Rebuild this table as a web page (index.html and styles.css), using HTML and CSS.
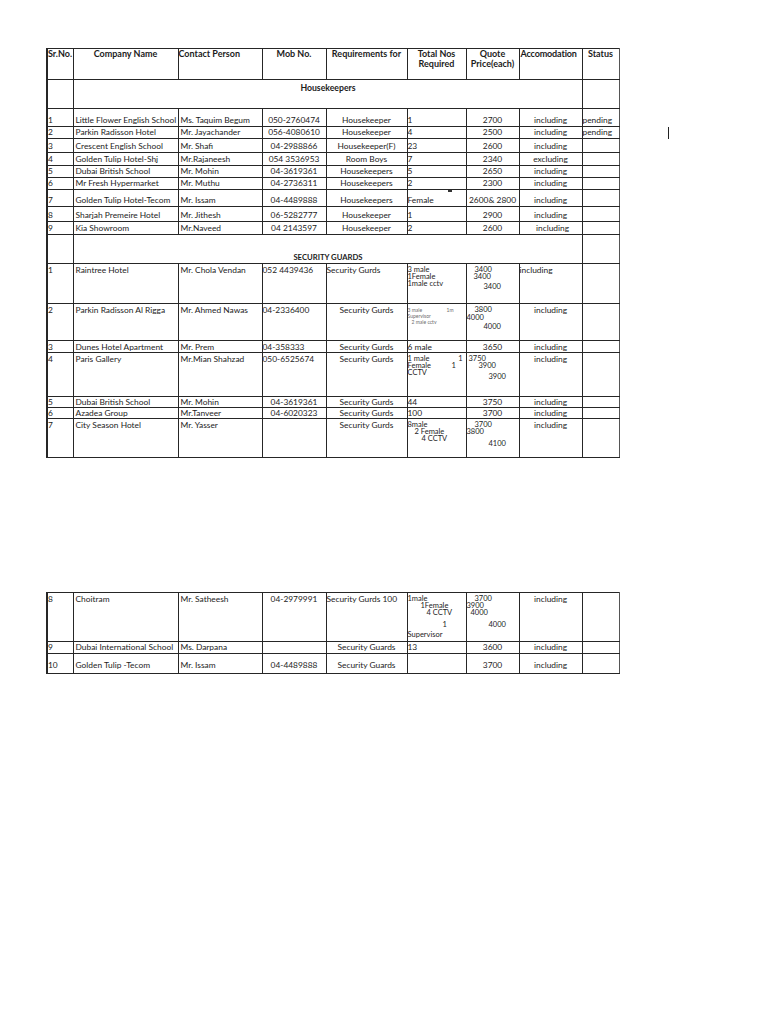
FILE: index.html
```html
<!DOCTYPE html>
<html>
<head>
<meta charset="utf-8">
<title>Requirements</title>
<link rel="stylesheet" href="styles.css">
</head>
<body>
<div class="page">
  <table class="sheet">
    <colgroup>
      <col class="c-sr"><col class="c-co"><col class="c-cp"><col class="c-mob"><col class="c-req"><col class="c-tot"><col class="c-qt"><col class="c-acc"><col class="c-st">
    </colgroup>
    <tr class="hdr">
      <td class="l">Sr.No.</td>
      <td class="c">Company Name</td>
      <td class="l">Contact Person</td>
      <td class="c">Mob No.</td>
      <td class="c">Requirements for</td>
      <td class="c">Total Nos<br>Required</td>
      <td class="c">Quote<br>Price(each)</td>
      <td class="l tight">Accomodation</td>
      <td class="c">Status</td>
    </tr>
    <tr class="h29">
      <td></td>
      <td colspan="7" class="sec top">Housekeepers</td>
      <td></td>
    </tr>
    <tr class="h18">
      <td class="sr">1</td><td>Little Flower English School</td><td>Ms. Taquim Begum</td><td class="c">050-2760474</td><td class="c">Housekeeper</td><td class="sr">1</td><td class="c">2700</td><td class="c">including</td><td class="sr">pending</td>
    </tr>
    <tr class="h12">
      <td class="sr">2</td><td>Parkin Radisson Hotel</td><td>Mr. Jayachander</td><td class="c">056-4080610</td><td class="c">Housekeeper</td><td class="sr">4</td><td class="c">2500</td><td class="c">including</td><td class="sr">pending</td>
    </tr>
    <tr class="h14">
      <td class="sr">3</td><td>Crescent English School</td><td>Mr. Shafi</td><td class="c">04-2988866</td><td class="c">Housekeeper(F)</td><td class="sr">23</td><td class="c">2600</td><td class="c">including</td><td></td>
    </tr>
    <tr class="h13">
      <td class="sr">4</td><td>Golden Tulip Hotel-Shj</td><td>Mr.Rajaneesh</td><td class="c">054 3536953</td><td class="c">Room Boys</td><td class="sr">7</td><td class="c">2340</td><td class="c">excluding</td><td></td>
    </tr>
    <tr class="h12">
      <td class="sr">5</td><td>Dubai British School</td><td>Mr. Mohin</td><td class="c">04-3619361</td><td class="c">Housekeepers</td><td class="sr">5</td><td class="c">2650</td><td class="c">including</td><td></td>
    </tr>
    <tr class="h12">
      <td class="sr">6</td><td>Mr Fresh Hypermarket</td><td>Mr. Muthu</td><td class="c">04-2736311</td><td class="c">Housekeepers</td><td class="sr">2</td><td class="c">2300</td><td class="c">including</td><td></td>
    </tr>
    <tr class="h17">
      <td class="sr">7</td><td>Golden Tulip Hotel-Tecom</td><td>Mr. Issam</td><td class="c">04-4489888</td><td class="c">Housekeepers</td><td class="sr">Female</td><td class="c">2600&amp; 2800</td><td class="c">including</td><td></td>
    </tr>
    <tr class="h15">
      <td class="sr">8</td><td>Sharjah Premeire Hotel</td><td>Mr. Jithesh</td><td class="c">06-5282777</td><td class="c">Housekeeper</td><td class="sr">1</td><td class="c">2900</td><td class="c">including</td><td></td>
    </tr>
    <tr class="h13">
      <td class="sr">9</td><td>Kia Showroom</td><td>Mr.Naveed</td><td class="c">04 2143597</td><td class="c">Housekeeper</td><td class="sr">2</td><td class="c">2600</td><td class="c nudge">including</td><td></td>
    </tr>
    <tr class="h29">
      <td></td>
      <td colspan="7" class="sec">SECURITY GUARDS</td>
      <td></td>
    </tr>
    <tr class="h40 tp">
      <td class="sr">1</td><td>Raintree Hotel</td><td>Mr. Chola Vendan</td><td class="l0">052 4439436</td><td class="l0">Security Gurds</td>
      <td class="ml"><div>3 male</div><div>1Female</div><div>1male cctv</div></td>
      <td class="ml"><div class="x8">3400</div><div class="x7">3400</div><div class="x17 g3">3400</div></td>
      <td class="l0">including</td><td></td>
    </tr>
    <tr class="h37 tp">
      <td class="sr">2</td><td>Parkin Radisson Al Rigga</td><td>Mr. Ahmed Nawas</td><td class="l0">04-2336400</td><td class="c">Security Gurds</td>
      <td class="ml tiny"><div class="split"><span>3 male</span><span class="r12">1m</span></div><div>Supervisor</div><div class="x4">2 male cctv</div></td>
      <td class="ml lh9"><div class="x8">3800</div><div>4000</div><div class="x17">4000</div></td>
      <td class="c">including</td><td></td>
    </tr>
    <tr class="h12 tp">
      <td class="sr">3</td><td>Dunes Hotel Apartment</td><td>Mr. Prem</td><td class="l0">04-358333</td><td class="c">Security Gurds</td><td class="sr">6 male</td><td class="c">3650</td><td class="c">including</td><td></td>
    </tr>
    <tr class="h44 tp">
      <td class="sr">4</td><td>Paris Gallery</td><td>Mr.Mian Shahzad</td><td class="l0">050-6525674</td><td class="c">Security Gurds</td>
      <td class="ml"><div class="split"><span>1 male</span><span class="r1">1</span></div><div><span class="w44">Female</span>1</div><div>CCTV</div></td>
      <td class="ml"><div class="x2">3750</div><div class="x12">3900</div><div class="x22 g4">3900</div></td>
      <td class="c">including</td><td></td>
    </tr>
    <tr class="h11 tp">
      <td class="sr">5</td><td>Dubai British School</td><td>Mr. Mohin</td><td class="c">04-3619361</td><td class="c">Security Gurds</td><td class="sr">44</td><td class="c">3750</td><td class="c">including</td><td></td>
    </tr>
    <tr class="h11 tp">
      <td class="sr">6</td><td>Azadea Group</td><td>Mr.Tanveer</td><td class="c">04-6020323</td><td class="c">Security Gurds</td><td class="sr">100</td><td class="c">3700</td><td class="c">including</td><td></td>
    </tr>
    <tr class="h39 tp">
      <td class="sr">7</td><td>City Season Hotel</td><td>Mr. Yasser</td><td></td><td class="c">Security Gurds</td>
      <td class="ml"><div>8male</div><div class="x7">2 Female</div><div class="x14">4 CCTV</div></td>
      <td class="ml"><div class="x8">3700</div><div>3800</div><div class="x22 g5">4100</div></td>
      <td class="c">including</td><td></td>
    </tr>
  </table>

  <table class="sheet second">
    <colgroup>
      <col class="c-sr"><col class="c-co"><col class="c-cp"><col class="c-mob"><col class="c-req"><col class="c-tot"><col class="c-qt"><col class="c-acc"><col class="c-st">
    </colgroup>
    <tr class="h49 tp">
      <td class="sr">8</td><td>Choitram</td><td>Mr. Satheesh</td><td class="c">04-2979991</td><td class="l0">Security Gurds 100</td>
      <td class="ml"><div>1male</div><div class="x13">1Female</div><div class="x19">4 CCTV</div><div class="x35 g4">1</div><div class="g3">Supervisor</div></td>
      <td class="ml"><div class="x8">3700</div><div>3900</div><div class="x4">4000</div><div class="x22 g5">4000</div></td>
      <td class="c">including</td><td></td>
    </tr>
    <tr class="h12">
      <td class="sr">9</td><td>Dubai International School</td><td>Ms. Darpana</td><td></td><td class="c">Security Guards</td><td class="sr">13</td><td class="c">3600</td><td class="c">including</td><td></td>
    </tr>
    <tr class="h20 lift">
      <td class="sr">10</td><td>Golden Tulip -Tecom</td><td>Mr. Issam</td><td class="c">04-4489888</td><td class="c">Security Guards</td><td></td><td class="c">3700</td><td class="c">including</td><td></td>
    </tr>
  </table>

  <span class="mark-bar"></span>
  <span class="mark-dash"></span>
</div>
</body>
</html>
```

FILE: styles.css
```css
* { box-sizing: border-box; }
html, body { margin: 0; padding: 0; background: #ffffff; }
body { font-family: Lato, "Open Sans", "Liberation Sans", sans-serif; color: #1c1c1c; }

.page {
  position: relative;
  width: 768px;
  height: 1024px;
  padding: 48px 0 0 46px;
}

.sheet {
  border-collapse: collapse;
  table-layout: fixed;
  width: 572px;
  font-size: 8.4px;
  line-height: 9px;
}
.sheet.second { margin-top: 134px; }

.c-sr { width: 26px; }
.c-co { width: 105px; }
.c-cp { width: 84px; }
.c-mob { width: 64px; }
.c-req { width: 81px; }
.c-tot { width: 59px; }
.c-qt { width: 53px; }
.c-acc { width: 63px; }
.c-st { width: 37px; }

.sheet td {
  border: 1px solid #262626;
  padding: 0 1px 1px 2px;
  vertical-align: bottom;
  white-space: nowrap;
  overflow: hidden;
}
.sheet td:first-child { border-left-width: 2px; }
.sheet td:last-child { border-right: 1.5px solid #555; }

.sheet td.sr { padding-left: 0; }
.sheet td.l0 { padding-left: 0; }
.sheet td.c { text-align: center; padding-left: 1px; }
.sheet td.nudge { padding-left: 5px; }

.hdr td {
  height: 31px;
  vertical-align: top;
  font-weight: 700;
  font-size: 9px;
  line-height: 10px;
  padding-top: 0;
}
.hdr td.l { padding-left: 0; }
.hdr td.tight { padding-left: 1px; letter-spacing: -0.15px; }

.sheet td.sec {
  text-align: center;
  font-weight: 700;
  font-size: 7.7px;
  padding-bottom: 1px;
}
.sheet td.sec.top { vertical-align: top; padding-top: 3px; font-size: 8.7px; }

.tp td { vertical-align: top; padding-top: 2px; padding-bottom: 0; }
.h11.tp td { padding-top: 1px; }
.lift td { padding-bottom: 3px; }

.h11 td { height: 11px; }
.h12 td { height: 12px; }
.h13 td { height: 13px; }
.h14 td { height: 14px; }
.h15 td { height: 15px; }
.h17 td { height: 17px; }
.h18 td { height: 18px; }
.h20 td { height: 20px; }
.h29 td { height: 29px; }
.h37 td { height: 37px; }
.h39 td { height: 39px; }
.h40 td { height: 40px; }
.h44 td { height: 44px; }
.h49 td { height: 49px; }

.sheet td.ml { padding-left: 0; padding-right: 0; padding-top: 1.5px; font-size: 7.5px; line-height: 7.4px; }
.sheet td.ml.lh9 { line-height: 8.7px; }
.sheet td.tiny { font-size: 5px; line-height: 6px; color: #6c6c6c; padding-top: 3px; }

.split { display: flex; justify-content: space-between; }
.r1 { padding-right: 3px; }
.r12 { padding-right: 12px; }
.w44 { display: inline-block; width: 44px; }

.x2 { padding-left: 2px; }
.x4 { padding-left: 4px; }
.x7 { padding-left: 7px; }
.x8 { padding-left: 8px; }
.x12 { padding-left: 12px; }
.x13 { padding-left: 13px; }
.x14 { padding-left: 14px; }
.x17 { padding-left: 17px; }
.x19 { padding-left: 19px; }
.x22 { padding-left: 22px; }
.x35 { padding-left: 35px; }
.g3 { margin-top: 3px; }
.g4 { margin-top: 4px; }
.g5 { margin-top: 4.5px; }

.mark-bar {
  position: absolute;
  left: 668px;
  top: 127px;
  width: 1.2px;
  height: 12px;
  background: #222;
}
.mark-dash {
  position: absolute;
  left: 448px;
  top: 190px;
  width: 4px;
  height: 1.5px;
  background: #333;
}
```
